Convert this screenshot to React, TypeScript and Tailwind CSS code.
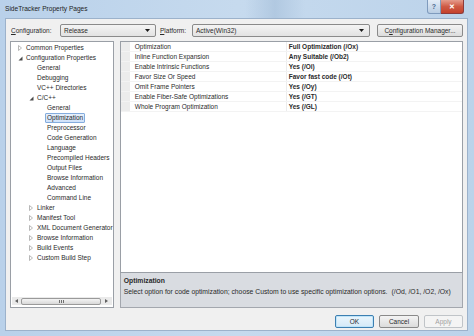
import type { ReactNode } from "react";

type TreeItem = {
  label: string;
  level: 0 | 1 | 2;
  arrow?: "open" | "closed";
  selected?: boolean;
};

const treeItems: TreeItem[] = [
  { label: "Common Properties", level: 0, arrow: "closed" },
  { label: "Configuration Properties", level: 0, arrow: "open" },
  { label: "General", level: 1 },
  { label: "Debugging", level: 1 },
  { label: "VC++ Directories", level: 1 },
  { label: "C/C++", level: 1, arrow: "open" },
  { label: "General", level: 2 },
  { label: "Optimization", level: 2, selected: true },
  { label: "Preprocessor", level: 2 },
  { label: "Code Generation", level: 2 },
  { label: "Language", level: 2 },
  { label: "Precompiled Headers", level: 2 },
  { label: "Output Files", level: 2 },
  { label: "Browse Information", level: 2 },
  { label: "Advanced", level: 2 },
  { label: "Command Line", level: 2 },
  { label: "Linker", level: 1, arrow: "closed" },
  { label: "Manifest Tool", level: 1, arrow: "closed" },
  { label: "XML Document Generator", level: 1, arrow: "closed" },
  { label: "Browse Information", level: 1, arrow: "closed" },
  { label: "Build Events", level: 1, arrow: "closed" },
  { label: "Custom Build Step", level: 1, arrow: "closed" },
];

const properties = [
  ["Optimization", "Full Optimization (/Ox)"],
  ["Inline Function Expansion", "Any Suitable (/Ob2)"],
  ["Enable Intrinsic Functions", "Yes (/Oi)"],
  ["Favor Size Or Speed", "Favor fast code (/Ot)"],
  ["Omit Frame Pointers", "Yes (/Oy)"],
  ["Enable Fiber-Safe Optimizations", "Yes (/GT)"],
  ["Whole Program Optimization", "Yes (/GL)"],
];

const levelPadding = ["pl-[5px]", "pl-[16px]", "pl-[26px]"];

function Arrow({ kind }: { kind?: "open" | "closed" }) {
  if (kind === "closed") {
    return (
      <svg width="4" height="6" viewBox="0 0 4 6">
        <path d="M0.5 0.5 L3.5 3 L0.5 5.5 Z" fill="#ffffff" stroke="#a6a6a6" strokeWidth="0.8" />
      </svg>
    );
  }
  if (kind === "open") {
    return (
      <svg width="5" height="5" viewBox="0 0 5 5">
        <path d="M4.5 0.5 L4.5 4.5 L0.5 4.5 Z" fill="#4a4a4a" />
      </svg>
    );
  }
  return null;
}

function ComboArrow() {
  return (
    <svg width="5" height="3" viewBox="0 0 5 3">
      <path d="M0 0 L5 0 L2.5 3 Z" fill="#1a1a1a" />
    </svg>
  );
}

function Combo({ value, className }: { value: string; className: string }) {
  return (
    <div
      className={`flex h-[13px] items-center justify-between rounded-[2px] border border-[#8a8a8a] bg-gradient-to-b from-[#f4f4f4] to-[#e2e2e2] pl-[3px] pr-[5px] ${className}`}
    >
      <span>{value}</span>
      <ComboArrow />
    </div>
  );
}

function Button({
  children,
  className = "",
  variant = "normal",
}: {
  children: ReactNode;
  className?: string;
  variant?: "normal" | "default" | "disabled";
}) {
  const look =
    variant === "default"
      ? "border-[#3c7fb1] bg-gradient-to-b from-[#eaf6fd] to-[#d4e9f7] text-[#2a2a2a] shadow-[inset_0_0_0_1px_#bfe4f9]"
      : variant === "disabled"
        ? "border-[#c0c4c8] bg-[#f4f4f4] text-[#a0a0a0]"
        : "border-[#8a8a8a] bg-gradient-to-b from-[#f4f4f4] to-[#dcdcdc] text-[#2a2a2a]";

  return (
    <div
      className={`flex h-[13px] items-center justify-center rounded-[2px] border ${look} ${className}`}
    >
      {children}
    </div>
  );
}

export default function App() {
  return (
    <div className="relative h-[336px] w-[474px] overflow-hidden bg-gradient-to-r from-[#b9d1ea] via-[#c6daee] to-[#bcd3ea] font-['Liberation_Sans',Arial,sans-serif] text-[6.5px] leading-[10px] text-[#2a2a2a]">
      {/* title bar */}
      <div className="relative flex h-[18px] items-center pl-[5px]">
        <span className="text-[6.6px] text-[#1e1e1e]">SideTracker Property Pages</span>
        <div className="absolute left-[245px] top-0 h-[18px] w-[60px] bg-gradient-to-r from-transparent via-[#a9c2dc] to-transparent opacity-70" />
        <div className="absolute right-[10px] top-0 flex h-[14px]">
          <div className="flex w-[14px] items-center justify-center rounded-bl-[3px] border border-t-0 border-[#7f9bbd] bg-gradient-to-b from-[#e3edf7] to-[#b9cde3] text-[7px] font-bold text-[#4c6a90]">
            ?
          </div>
          <div className="flex w-[23px] items-center justify-center rounded-br-[3px] border border-l-0 border-t-0 border-[#8d3b3b] bg-gradient-to-b from-[#e49b8c] via-[#cf5a45] to-[#c4412c] text-[7px] font-bold text-white">
            ✕
          </div>
        </div>
      </div>

      {/* client area */}
      <div className="ml-[5px] flex h-[313px] w-[463px] flex-col border border-[#9cb2cb] bg-[#f0f0f0] px-[4px] pt-[5px]">
        {/* configuration row */}
        <div className="flex h-[13px] items-center">
          <span className="w-[50px] pl-[1px]">
            <span className="underline">C</span>onfiguration:
          </span>
          <Combo value="Release" className="w-[96px]" />
          <span className="ml-[4px] w-[32px]">
            <span className="underline">P</span>latform:
          </span>
          <Combo value="Active(Win32)" className="w-[178px]" />
          <Button className="ml-[7px] w-[86px]">
            C<span className="underline">o</span>nfiguration Manager...
          </Button>
        </div>

        {/* main area */}
        <div className="mt-[4px] flex h-[267px] gap-[6px]">
          {/* tree */}
          <div className="flex w-[104px] flex-col border border-[#9a9fa6] bg-white">
            <div className="flex-1 overflow-hidden pt-[1px]">
              {treeItems.map((item, index) => (
                <div
                  key={index}
                  className={`flex h-[10px] items-center whitespace-nowrap ${levelPadding[item.level]}`}
                >
                  <span className="flex w-[10px] shrink-0 items-center justify-start pl-[2px]">
                    <Arrow kind={item.arrow} />
                  </span>
                  {item.selected ? (
                    <span className="-ml-[2px] rounded-[1px] border border-[#84acdd] bg-gradient-to-b from-[#e6f0fc] to-[#cfe2fa] px-[1px] leading-[8px]">
                      {item.label}
                    </span>
                  ) : (
                    <span>{item.label}</span>
                  )}
                </div>
              ))}
            </div>
            {/* horizontal scrollbar */}
            <div className="mx-[1px] mb-[2px] flex h-[8px] items-center bg-[#eaeaea]">
              <div className="flex w-[9px] items-center justify-center">
                <svg width="3" height="4" viewBox="0 0 3 4">
                  <path d="M3 0 L0 2 L3 4 Z" fill="#606060" />
                </svg>
              </div>
              <div className="flex h-[7px] w-[80px] items-center justify-center rounded-[2px] border border-[#9a9a9a] bg-gradient-to-b from-[#f4f4f4] to-[#d8d8d8]">
                <div className="flex gap-[1px]">
                  <div className="h-[3px] w-px bg-[#707070]" />
                  <div className="h-[3px] w-px bg-[#707070]" />
                  <div className="h-[3px] w-px bg-[#707070]" />
                </div>
              </div>
              <div className="flex flex-1 items-center justify-center">
                <svg width="3" height="4" viewBox="0 0 3 4">
                  <path d="M0 0 L3 2 L0 4 Z" fill="#606060" />
                </svg>
              </div>
            </div>
          </div>

          {/* property grid */}
          <div className="flex w-[344px] flex-col">
            <div className="flex-1 border border-[#9a9fa6] bg-white">
              {properties.map(([name, value]) => (
                <div key={name} className="flex h-[10px] items-center whitespace-nowrap border-b border-[#f3f3f3]">
                  <div className="h-full w-[9px] bg-[#ececec]" />
                  <div className="w-[156px] pl-[5px]">{name}</div>
                  <div className="flex h-full flex-1 items-center border-l border-[#ececec] pl-[2px] font-bold">
                    {value}
                  </div>
                </div>
              ))}
            </div>
            <div className="h-[35px] border border-t-0 border-[#a3a7ae] bg-[#d9dce1] px-[3px] pt-[3px] text-[6.8px]">
              <div className="font-bold">Optimization</div>
              <div className="mt-px flex whitespace-nowrap">
                <span>
                  Select option for code optimization; choose Custom to use specific optimization options.
                </span>
                <span className="ml-[4px]">(/Od, /O1, /O2, /Ox)</span>
              </div>
            </div>
          </div>
        </div>

        {/* bottom buttons */}
        <div className="mt-[7px] flex justify-end gap-[5px]">
          <Button variant="default" className="w-[39px]">
            OK
          </Button>
          <Button className="w-[40px]">Cancel</Button>
          <Button variant="disabled" className="w-[39px]">
            Apply
          </Button>
        </div>
      </div>
    </div>
  );
}
